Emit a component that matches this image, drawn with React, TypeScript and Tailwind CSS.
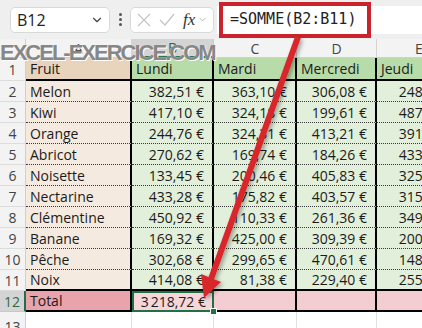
import { ChevronDown } from 'lucide-react';

const COLS = ['A', 'B', 'C', 'D', 'E'];

const ROWS: [string, string, string, string, string][] = [
  ['Melon', '382,51 €', '363,10 €', '306,08 €', '248,35 €'],
  ['Kiwi', '417,10 €', '324,18 €', '199,61 €', '487,20 €'],
  ['Orange', '244,76 €', '324,31 €', '413,21 €', '391,44 €'],
  ['Abricot', '270,62 €', '169,74 €', '184,26 €', '433,19 €'],
  ['Noisette', '133,45 €', '200,46 €', '405,83 €', '325,08 €'],
  ['Nectarine', '433,28 €', '175,82 €', '403,57 €', '315,62 €'],
  ['Clémentine', '450,92 €', '110,33 €', '261,36 €', '349,77 €'],
  ['Banane', '169,32 €', '425,00 €', '309,39 €', '200,15 €'],
  ['Pêche', '302,68 €', '299,65 €', '470,61 €', '148,90 €'],
  ['Noix', '414,08 €', '81,38 €', '229,40 €', '255,31 €'],
];

function RowNum({ n, selected }: { n: number; selected?: boolean }) {
  return (
    <div
      className={
        selected
          ? 'flex items-center justify-center bg-[#d4d4d4] border-r-2 border-r-[#1e7145] border-b border-b-[#c8c8c8] text-[14px] text-[#2a6b45]'
          : 'flex items-center justify-center bg-[#f3f3f3] border-r border-r-[#cfcfcf] border-b border-b-[#dcdcdc] text-[14px] text-[#444]'
      }
    >
      {n}
    </div>
  );
}

export default function App() {
  return (
    <div className="relative w-[422px] h-[328px] overflow-hidden bg-white font-['Open_Sans',sans-serif] text-[#1b1b1b]">
      {/* top bar */}
      <div className="flex items-center h-[39px] bg-[#efefef]">
        <div className="ml-[10px] w-[100px] h-[26px] shrink-0 bg-white rounded-[5px] border border-[#d9d9d9] flex items-center justify-between pl-[6px] pr-[5px]">
          <span className="text-[16px] text-[#222]">B12</span>
          <ChevronDown size={14} strokeWidth={2} className="text-[#444]" />
        </div>
        <div className="ml-[9px] flex flex-col gap-[2px] shrink-0">
          <span className="w-[3px] h-[3px] rounded-full bg-[#555]" />
          <span className="w-[3px] h-[3px] rounded-full bg-[#555]" />
          <span className="w-[3px] h-[3px] rounded-full bg-[#555]" />
        </div>
        <div className="ml-[8px] w-[84px] h-[26px] shrink-0 bg-white rounded-[5px] border border-[#d9d9d9] flex items-center pl-[6px] gap-[8px]">
          <svg width="14" height="14" viewBox="0 0 14 14" className="text-[#c4c4c4]">
            <path d="M1 1 L13 13 M13 1 L1 13" stroke="currentColor" strokeWidth="1.2" fill="none" />
          </svg>
          <svg width="16" height="14" viewBox="0 0 16 14" className="text-[#c4c4c4]">
            <path d="M1 7 L6 12 L15 1" stroke="currentColor" strokeWidth="1.2" fill="none" />
          </svg>
          <span className="font-['Liberation_Serif',serif] italic text-[17px] text-[#333] leading-none">fx</span>
          <ChevronDown size={11} strokeWidth={1.5} className="text-[#999] -ml-[6px]" />
        </div>
        <div className="ml-[3px] flex-1 h-[28px] bg-white flex items-center">
          <div className="ml-[2px] w-[152px] h-[36px] shrink-0 border-4 border-[#c9242b] bg-white flex items-center pl-[7px]">
            <span className="font-['DejaVu_Sans_Mono',monospace] text-[15px] text-[#222]">=SOMME(B2:B11)</span>
          </div>
        </div>
      </div>

      {/* grid */}
      <div className="grid grid-cols-[26px_106px_82px_83px_80px_85px] grid-rows-[19px_23px_repeat(11,21px)_30px] w-[462px]">
        {/* column headers */}
        <div className="bg-[#f3f3f3] border-r border-r-[#cfcfcf] border-b border-b-[#d0d0d0]" />
        {COLS.map((c) => (
          <div
            key={c}
            className={
              c === 'B'
                ? 'flex items-center justify-center bg-[#d4d4d4] border-r border-r-[#c8c8c8] border-b-2 border-b-[#1e7145] text-[14px] text-[#2a6b45]'
                : 'flex items-center justify-center bg-[#f3f3f3] border-r border-r-[#d4d4d4] border-b border-b-[#d0d0d0] text-[14px] text-[#444]'
            }
          >
            {c}
          </div>
        ))}

        {/* row 1 */}
        <RowNum n={1} />
        <div className="flex items-center pl-[4px] bg-[#e8d4bc] border-r-2 border-b-2 border-black text-[14px]">Fruit</div>
        <div className="flex items-center pl-[4px] bg-[#b7dba9] border-r-2 border-b-2 border-black text-[14px]">Lundi</div>
        <div className="flex items-center pl-[4px] bg-[#b7dba9] border-r-2 border-b-2 border-black text-[14px]">Mardi</div>
        <div className="flex items-center pl-[4px] bg-[#b7dba9] border-r-2 border-b-2 border-black text-[14px]">Mercredi</div>
        <div className="flex items-center pl-[4px] bg-[#b7dba9] border-b-2 border-black text-[14px]">Jeudi</div>

        {/* rows 2-11 */}
        {ROWS.map((r, i) => {
          const last = i === ROWS.length - 1;
          const bottom = last
            ? 'border-b-2 border-b-black'
            : 'border-b border-b-[#3a3a3a] [border-bottom-style:dotted]';
          return (
            <div key={r[0]} className="contents">
              <RowNum n={i + 2} />
              <div className={`flex items-center pl-[4px] bg-[#f4eae0] border-r-2 border-r-black text-[14px] ${bottom}`}>
                {r[0]}
              </div>
              {r.slice(1).map((v, j) => (
                <div
                  key={j}
                  className={`flex items-center justify-end pr-[8px] bg-[#e2efda] text-[14px] ${bottom} ${j < 3 ? 'border-r-2 border-r-black' : ''}`}
                >
                  {v}
                </div>
              ))}
            </div>
          );
        })}

        {/* row 12 */}
        <RowNum n={12} selected />
        <div className="flex items-center pl-[4px] bg-[#e9a3ab] border-r-2 border-b-2 border-black text-[14px]">Total</div>
        <div className="relative flex items-center justify-end pr-[6px] bg-[#f7d6da] border-2 border-[#1e7145] text-[14px]">
          3{'\u202f'}218,72 €
          <span className="absolute -right-[5px] -bottom-[5px] w-[7px] h-[7px] bg-[#1e7145] border border-white" />
        </div>
        <div className="bg-[#f4cdd2] border-r-2 border-b-2 border-black" />
        <div className="bg-[#f4cdd2] border-r-2 border-b-2 border-black" />
        <div className="bg-[#f4cdd2] border-b-2 border-black" />

        {/* row 13 */}
        <RowNum n={13} />
        <div className="border-r border-r-[#e0e0e0]" />
        <div className="border-r border-r-[#e0e0e0]" />
        <div className="border-r border-r-[#e0e0e0]" />
        <div className="border-r border-r-[#e0e0e0]" />
        <div />
      </div>

      {/* watermark */}
      <div className="absolute left-0 top-[36px] font-['Liberation_Sans',sans-serif] font-bold text-[22px] tracking-[-2px] text-[#878787] [text-shadow:0_0_1px_#fff,1px_1px_0_#fff] pointer-events-none whitespace-nowrap">
        EXCEL-EXERCICE.COM
      </div>

      {/* arrow */}
      <svg className="absolute left-0 top-0 pointer-events-none" width="422" height="328" viewBox="0 0 422 328">
        <defs>
          <filter id="sh" x="-20%" y="-20%" width="140%" height="140%">
            <feDropShadow dx="2" dy="2" stdDeviation="2" floodColor="#000" floodOpacity="0.35" />
          </filter>
        </defs>
        <g filter="url(#sh)">
          <line x1="298" y1="37" x2="211" y2="279" stroke="#d8282b" strokeWidth="6" />
          <polygon points="204,298 221,282 201,274" fill="#d8282b" />
        </g>
      </svg>
    </div>
  );
}
